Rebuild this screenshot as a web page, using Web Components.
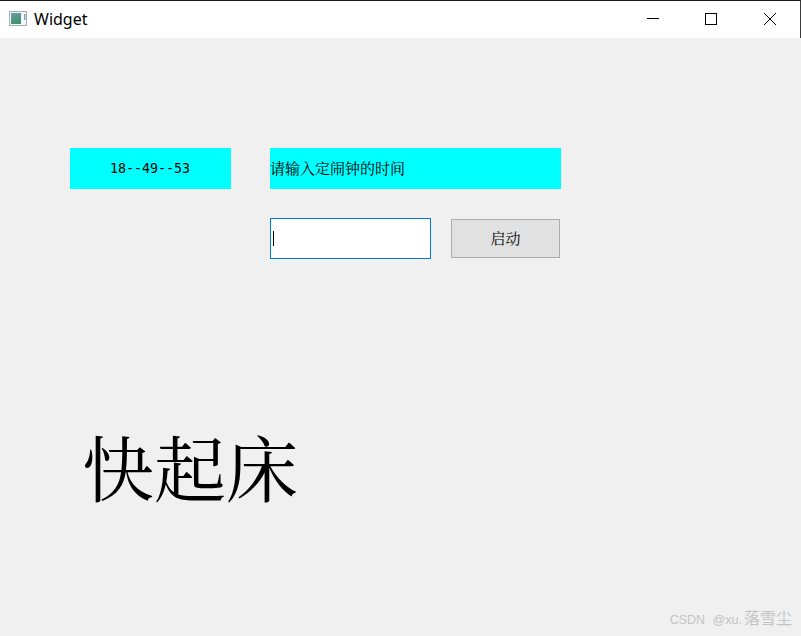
<!DOCTYPE html>
<html lang="zh">
<head>
<meta charset="utf-8">
<style>
html,body{margin:0;padding:0;height:100%;}
body{background:#f0f0f0;overflow:hidden;}
</style>
</head>
<body>
<qt-window title="Widget">
  <alarm-form time="18--49--53" prompt="请输入定闹钟的时间" action="启动" message="快起床"></alarm-form>
</qt-window>
<script>
const SERIF='"Noto Serif CJK SC","Source Han Serif SC","AR PL UMing CN","Noto Sans CJK SC",serif';
class QtWindow extends HTMLElement{
  constructor(){super();const s=this.attachShadow({mode:'open'});
  s.innerHTML=`<style>
  :host{display:flex;flex-direction:column;width:801px;height:636px;position:relative;box-sizing:border-box;background:#f0f0f0;overflow:hidden;}
  .bar{height:38px;box-sizing:border-box;flex:none;background:#fff;border-top:1px solid #1c1c1c;border-right:1px solid #3a3a3a;display:flex;align-items:center;color:#000;}
  .ico{margin-left:9px;margin-right:7px;margin-top:-2px;display:block}
  .t{flex:1;margin-top:-1px;font:16px/1 "Noto Sans",sans-serif}
  .btn{width:58px;height:37px;box-sizing:border-box;padding-bottom:1px;display:flex;align-items:center;justify-content:center}
  .btn.x{margin-left:1px}
  .btns{display:flex;margin-right:1px}
  main{flex:1;min-height:0}
  .wm{position:absolute;right:9px;bottom:6px;font:12.5px/20px "Liberation Sans",sans-serif;color:#c4c4c4;word-spacing:4px}
  .wm b{font:400 16px/20px "Noto Sans CJK SC",sans-serif;margin-left:2px}
  </style>
  <div class="bar">
    <svg class="ico" width="18" height="15" viewBox="0 0 18 15"><defs><linearGradient id="g" x1="0" y1="0" x2=".4" y2="1"><stop offset="0" stop-color="#6f9cb0"/><stop offset="1" stop-color="#3f9268"/></linearGradient></defs><rect x=".5" y=".5" width="17" height="14" fill="#f4f6f8" stroke="#a4abb3"/><rect x="2" y="2" width="10" height="11" fill="url(#g)"/><rect x="15" y="3" width="1.5" height="6" fill="#7fa9b8"/></svg>
    <span class="t"></span>
    <div class="btns">
      <div class="btn"><svg width="14" height="14" viewBox="0 0 14 14"><path d="M1 6.5H13" stroke="#000" fill="none"/></svg></div>
      <div class="btn"><svg width="14" height="14" viewBox="0 0 14 14"><rect x="1.5" y="1.5" width="11" height="11" stroke="#000" fill="none"/></svg></div>
      <div class="btn x"><svg width="14" height="14" viewBox="0 0 14 14"><path d="M1 1L13 13M13 1L1 13" stroke="#000" fill="none"/></svg></div>
    </div>
  </div>
  <main><slot></slot></main>
  <div class="wm">CSDN @xu.<b>落雪尘</b></div>`;
  s.querySelector('.t').textContent=this.getAttribute('title');}
}
customElements.define('qt-window',QtWindow);

class TimeLabel extends HTMLElement{
  constructor(){super();const s=this.attachShadow({mode:'open'});
  s.innerHTML=`<style>:host{display:flex;align-items:center;background:#0ff;color:#000;height:41px;box-sizing:border-box;font:15px/1 ${SERIF};}
  :host([center]){justify-content:center;font:13.33px/1 "DejaVu Sans Mono",monospace}
  span{display:block;margin-top:-2px}
  :host([center]) span{margin:1px 0 0 -1px}</style><span><slot></slot></span>`;}
}
customElements.define('time-label',TimeLabel);

class QtInput extends HTMLElement{
  constructor(){super();const s=this.attachShadow({mode:'open'});
  s.innerHTML=`<style>:host{display:flex;align-items:center;height:41px;box-sizing:border-box;background:#fff;border:1px solid #0078d7;padding-left:2px}
  i{display:block;width:1px;height:15px;background:#000}</style><i></i>`;}
}
customElements.define('qt-input',QtInput);

class QtButton extends HTMLElement{
  constructor(){super();const s=this.attachShadow({mode:'open'});
  s.innerHTML=`<style>:host{display:flex;align-items:center;justify-content:center;height:39px;box-sizing:border-box;background:#e1e1e1;border:1px solid #adadad;color:#000;font:15px/1 ${SERIF};}
  span{display:block;margin-top:-3px}</style><span><slot></slot></span>`;}
}
customElements.define('qt-button',QtButton);

class AlarmForm extends HTMLElement{
  constructor(){super();const s=this.attachShadow({mode:'open'});
  s.innerHTML=`<style>
  :host{display:block;box-sizing:border-box;padding:110px 0 0 70px;}
  .g{display:grid;grid-template-columns:161px 161px 110px;column-gap:39px;row-gap:29px;align-items:start}
  .p{grid-column:2 / span 2;width:291px;padding-left:0}
  .r{display:flex;gap:20px;grid-column:2 / span 2}
  .r qt-input{width:161px;flex:none}
  .r qt-button{width:109px;flex:none;margin-top:1px}
  .big{margin:163px 0 0 12px;font:72px/86px ${SERIF};color:#000}
  </style>
  <div class="g">
    <time-label center class="tm"></time-label>
    <time-label class="p"></time-label>
    <div class="r"><qt-input></qt-input><qt-button class="b"></qt-button></div>
  </div>
  <div class="big"></div>`;
  const a=n=>this.getAttribute(n);
  s.querySelector('.tm').textContent=a('time');
  s.querySelector('.p').textContent=a('prompt');
  s.querySelector('.b').textContent=a('action');
  s.querySelector('.big').textContent=a('message');
  }
}
customElements.define('alarm-form',AlarmForm);
</script>
</body>
</html>
